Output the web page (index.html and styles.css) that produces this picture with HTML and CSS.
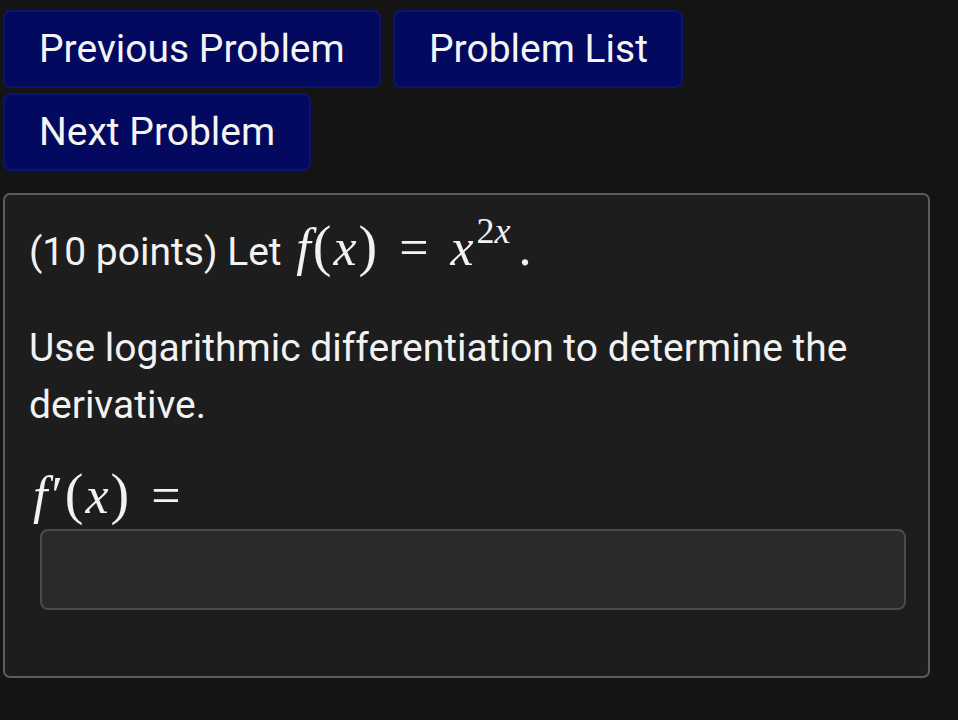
FILE: index.html
```html
<!DOCTYPE html>
<html lang="en">
<head>
    <meta charset="UTF-8">
    <meta name="viewport" content="width=device-width, initial-scale=1.0">
    <title>Problem</title>
    <link rel="stylesheet" href="styles.css">
</head>
<body>
    <div class="nav">
        <a class="nav-btn prev" href="#">Previous Problem</a>
        <a class="nav-btn list" href="#">Problem List</a>
        <a class="nav-btn next" href="#">Next Problem</a>
    </div>
    <div class="problem">
        <p class="intro">(10 points) Let <span class="math inline"><i>f</i><span class="paren">(</span><i>x</i><span class="paren">)</span><span class="eq">=</span><i>x</i><sup><span class="up">2</span><i>x</i></sup>.</span></p>
        <p class="task">Use logarithmic differentiation to determine the derivative.</p>
        <p class="answer-label"><span class="math"><i>f</i><span class="prime">&prime;</span><span class="paren">(</span><i>x</i><span class="paren">)</span><span class="eq">=</span></span></p>
        <input class="answer" type="text">
    </div>
</body>
</html>
```

FILE: styles.css
```css
body {
    margin: 0;
    padding: 10px 0 0 3px;
    background-color: #141414;
    color: #f2f2f2;
    font-family: Roboto, 'Noto Sans', sans-serif;
    height: 710px;
    overflow: hidden;
}
.nav {
    display: flex;
    flex-wrap: wrap;
    gap: 5px 12px;
    width: 700px;
}
.nav-btn {
    display: block;
    box-sizing: border-box;
    height: 78px;
    line-height: 74px;
    padding: 0 0 0 34px;
    background-color: #03095e;
    border: 2px solid #0b1470;
    border-radius: 8px;
    color: #f4f4f4;
    text-decoration: none;
    font-size: 39px;
    white-space: nowrap;
}
.prev { width: 378px; }
.list { width: 290px; }
.next { width: 308px; }
.problem {
    box-sizing: border-box;
    margin-top: 22px;
    width: 927px;
    height: 485px;
    background-color: #1d1d1d;
    border: 2px solid #5c5c5c;
    border-radius: 7px;
    padding: 29px 24px 0 24px;
}
.problem p {
    margin: 0;
    font-size: 39px;
    line-height: 57px;
}
.intro {
    height: 57px;
}
.task {
    padding-top: 39px;
}
.math {
    font-family: 'Liberation Serif', 'DejaVu Serif', serif;
    font-size: 52px;
    line-height: 40px;
}
.math.inline {
    margin-left: 5px;
}
.math i {
    font-style: italic;
}
.paren {
    font-size: 56px;
    margin: 0 2px;
}
.eq {
    margin: 0 22px 0 20px;
}
.prime {
    margin-left: 4px;
}
sup {
    font-size: 36px;
    line-height: 0;
    vertical-align: 0;
    position: relative;
    top: -22px;
    margin-left: 3px;
    margin-right: 8px;
}
.answer-label {
    margin-top: 38px !important;
    padding-left: 4px;
}
.answer {
    display: block;
    box-sizing: border-box;
    margin: 0 0 0 11px;
    width: 866px;
    height: 81px;
    background-color: #2a2a2a;
    border: 2px solid #4b4b4b;
    border-radius: 8px;
    outline: none;
}
```
